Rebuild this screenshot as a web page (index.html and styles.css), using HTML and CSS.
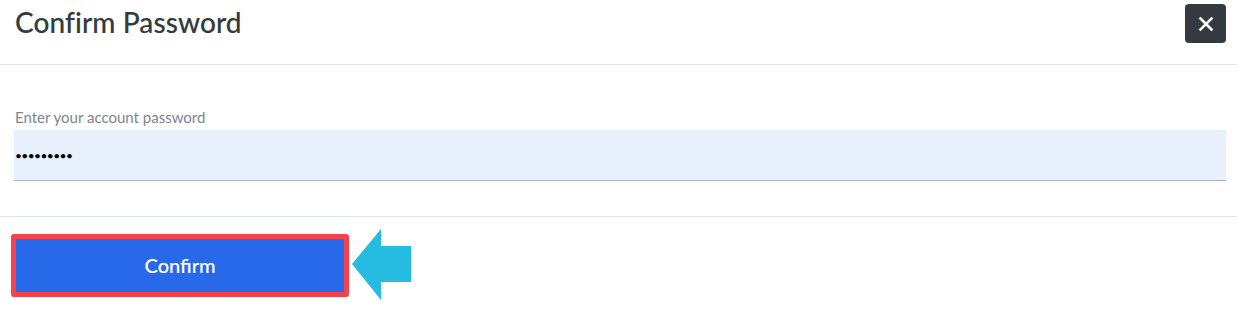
FILE: index.html
```html
<!DOCTYPE html>
<html lang="en">
<head>
<meta charset="utf-8">
<title>Confirm Password</title>
<link rel="stylesheet" href="styles.css">
</head>
<body>
<div class="modal">
  <header class="modal-header">
    <h2 class="modal-title">Confirm Password</h2>
    <button class="close-btn" type="button" aria-label="Close">
      <svg width="16" height="16" viewBox="0 0 16 16"><path d="M2.5 2.5 L13.5 13.5 M13.5 2.5 L2.5 13.5" stroke="#fff" stroke-width="2.6" stroke-linecap="square" fill="none"/></svg>
    </button>
  </header>
  <div class="modal-body">
    <label class="field-label" for="pw">Enter your account password</label>
    <input class="field-input" id="pw" type="password" value="123456789">
  </div>
  <footer class="modal-footer">
    <div class="highlight">
      <button class="confirm-btn" type="button">Confirm</button>
    </div>
    <svg class="pointer" width="60" height="72" viewBox="0 0 60 72"><polygon points="0,35 29,0 29,17 59,17 59,53 29,53 29,71" fill="#26bce2"/></svg>
  </footer>
</div>
</body>
</html>
```
FILE: styles.css
```css
html, body {
  margin: 0;
  padding: 0;
  background: #ffffff;
}
body {
  font-family: "Lato", "Open Sans", sans-serif;
  color: #333a40;
}
.modal {
  width: 1237px;
}
.modal-header {
  box-sizing: border-box;
  height: 65px;
  display: flex;
  justify-content: space-between;
  align-items: flex-start;
  padding: 4px 11px 0 15px;
  border-bottom: 1px solid #dfe4ec;
}
.modal-title {
  margin: 0;
  font-size: 28px;
  font-weight: 500;
  line-height: 37px;
  letter-spacing: 0.1px;
  color: #333a3f;
  -webkit-text-stroke: 0.12px #333a3f;
}
.close-btn {
  width: 41px;
  height: 39px;
  border: none;
  border-radius: 4px;
  background: #343a40;
  display: flex;
  align-items: center;
  justify-content: center;
  padding: 0;
  cursor: pointer;
}
.modal-body {
  padding: 41px 11px 0 14px;
  height: 152px;
  box-sizing: border-box;
  border-bottom: 1px solid #dfe4ec;
  display: flex;
  flex-direction: column;
}
.field-label {
  font-size: 15px;
  line-height: 22px;
  color: #7d8590;
  padding-left: 1px;
  margin-bottom: 2px;
}
.field-input {
  box-sizing: border-box;
  width: 1212px;
  height: 51px;
  border: none;
  border-bottom: 1px solid #aab4c3;
  background: #e8f0fe;
  padding: 0 0 0 1px;
  font-family: "Lato", sans-serif;
  font-size: 12px;
  letter-spacing: -0.6px;
  color: #000;
  outline: none;
}
.modal-footer {
  display: flex;
  align-items: center;
  padding: 12px 0 0 11px;
}
.highlight {
  border: 5px solid #f5424b;
  border-radius: 3px;
  display: flex;
}
.confirm-btn {
  width: 328px;
  height: 53px;
  border: none;
  background: #2769e9;
  color: #ffffff;
  font-family: "Lato", sans-serif;
  font-size: 20px;
  font-weight: 500;
  -webkit-text-stroke: 0.12px #ffffff;
  padding: 0;
  cursor: pointer;
}
.pointer {
  display: block;
  margin-left: 3px;
}
```
